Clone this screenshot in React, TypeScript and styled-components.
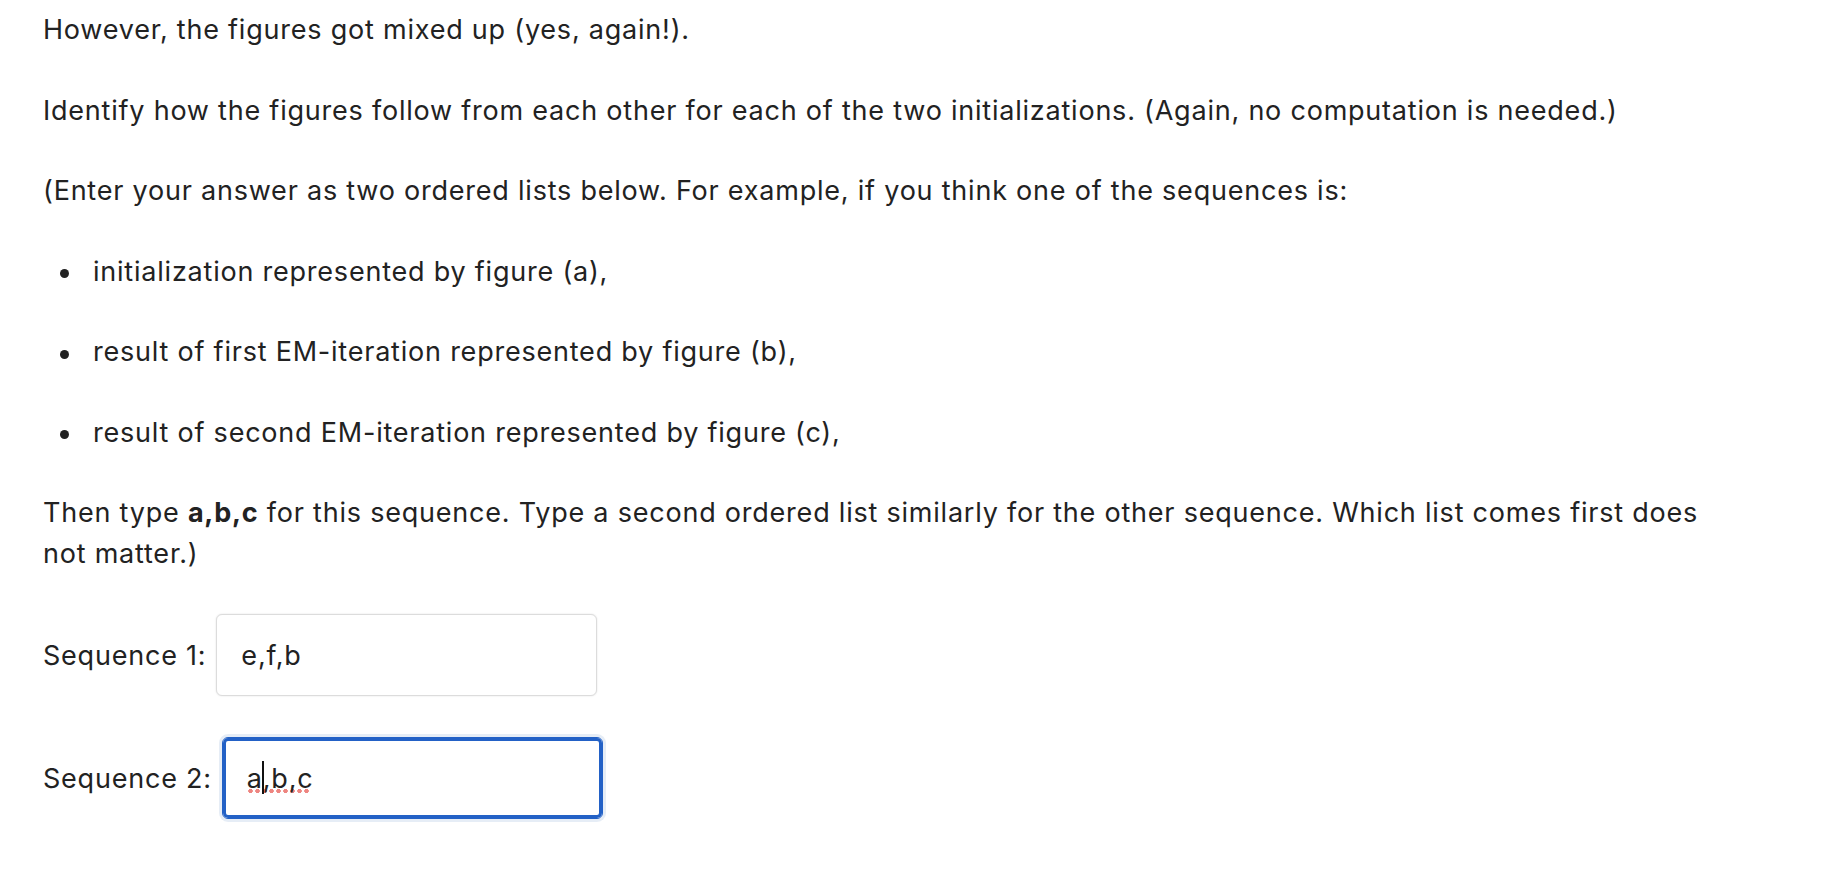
import { useEffect, useRef } from 'react'
import styled, { createGlobalStyle } from 'styled-components'

const GlobalStyle = createGlobalStyle`
  html, body {
    margin: 0;
    padding: 0;
    background: #ffffff;
  }
  body {
    font-family: Inter, "Noto Sans", "Liberation Sans", sans-serif;
    color: #222222;
  }
`

const Page = styled.main`
  padding: 10px 103px 40px 43px;
  font-size: 27px;
  line-height: 40.5px;
  letter-spacing: 0.78px;
`

const Paragraph = styled.p<{ $last?: boolean }>`
  margin: 0 0 ${p => (p.$last ? '0' : '40px')};
`

const BulletList = styled.ul`
  margin: 0 0 40px;
  padding: 0;
  list-style: none;
`

const BulletItem = styled.li`
  display: flex;
  align-items: center;

  &::before {
    content: '';
    flex: none;
    width: 9px;
    height: 9px;
    margin: 4px 24px 0 17px;
    border-radius: 50%;
    background: #222222;
  }

  & + & {
    margin-top: 40px;
  }
`

const Form = styled.div`
  display: flex;
  flex-direction: column;
  gap: 41px;
  margin-top: 40px;
`

const Row = styled.label`
  display: flex;
  align-items: baseline;
  gap: 10px;
`

const LabelText = styled.span`
  white-space: nowrap;
`

const InputWrap = styled.span`
  position: relative;
  display: inline-flex;
`

const AnswerInput = styled.input<{ $active?: boolean }>`
  box-sizing: border-box;
  width: 381px;
  height: 82px;
  padding: 0 24px;
  border: 1px solid ${p => (p.$active ? '#2361c6' : '#dcdcdc')};
  border-radius: 6px;
  background-color: #ffffff;
  font-family: inherit;
  font-size: 27px;
  letter-spacing: 0.78px;
  color: #222222;
  caret-color: ${p => (p.$active ? 'transparent' : '#111111')};
  outline: none;
  box-shadow: ${p =>
    p.$active
      ? 'inset 0 0 0 3px #2361c6, 0 0 0 3px rgba(200, 214, 235, 0.45)'
      : '0 0 2px rgba(0, 0, 0, 0.12)'};
`

// spell-check squiggle under the misspelt word, only under the text run
const SpellInput = styled(AnswerInput)`
  background-image: linear-gradient(to right, #ffffff 25px, transparent 25px 88px, #ffffff 88px),
    radial-gradient(circle, #ee8580 2px, transparent 2.4px);
  background-repeat: no-repeat, repeat-x;
  background-size: 100% 100%, 7px 6px;
  background-position: 0 0, 3px 50px;
`

const Caret = styled.span`
  position: absolute;
  left: 40px;
  top: 24px;
  width: 2px;
  height: 33px;
  background: #111111;
  pointer-events: none;
`

export default function App() {
  const secondRef = useRef<HTMLInputElement>(null)

  useEffect(() => {
    const el = secondRef.current
    if (el) {
      el.focus()
      el.setSelectionRange(1, 1)
    }
  }, [])

  return (
    <>
      <GlobalStyle />
      <Page>
        <Paragraph>However, the figures got mixed up (yes, again!).</Paragraph>
        <Paragraph>
          Identify how the figures follow from each other for each of the two initializations. (Again,
          no computation is needed.)
        </Paragraph>
        <Paragraph>
          (Enter your answer as two ordered lists below. For example, if you think one of the sequences
          is:
        </Paragraph>
        <BulletList>
          <BulletItem>initialization represented by figure (a),</BulletItem>
          <BulletItem>result of first EM-iteration represented by figure (b),</BulletItem>
          <BulletItem>result of second EM-iteration represented by figure (c),</BulletItem>
        </BulletList>
        <Paragraph $last>
          Then type <b>a,b,c</b> for this sequence. Type a second ordered list similarly for the other
          sequence. Which list comes first does not matter.)
        </Paragraph>
        <Form>
          <Row>
            <LabelText>Sequence 1:</LabelText>
            <InputWrap>
              <AnswerInput type="text" defaultValue="e,f,b" spellCheck={false} />
            </InputWrap>
          </Row>
          <Row>
            <LabelText>Sequence 2:</LabelText>
            <InputWrap>
              <SpellInput ref={secondRef} $active type="text" defaultValue="a,b,c" spellCheck={false} />
              <Caret />
            </InputWrap>
          </Row>
        </Form>
      </Page>
    </>
  )
}
